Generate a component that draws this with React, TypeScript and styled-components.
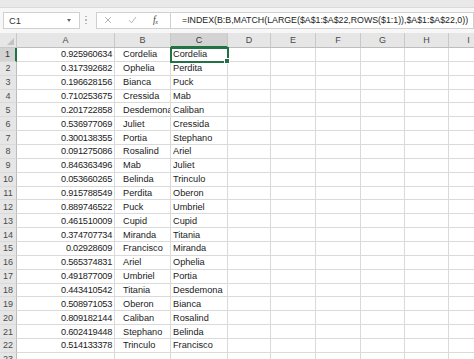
import React from "react";
import styled, { createGlobalStyle, css } from "styled-components";

const GlobalStyle = createGlobalStyle`
  html, body {
    margin: 0;
    padding: 0;
    background: #fff;
  }
  body {
    font-family: "Liberation Sans", Arial, sans-serif;
  }
`;

const GREEN = "#217346";
const ROW_H = 13.86;

const Window = styled.div`
  width: 474px;
  height: 359px;
  overflow: hidden;
  background: #fff;
`;

const Ribbon = styled.div`
  height: 7px;
  background: #e9e9e9;
  border-bottom: 1px solid #dadada;
`;

const FormulaBar = styled.div`
  height: 24px;
  background: #f7f7f7;
  display: flex;
  align-items: center;
  padding: 0 0 0 3px;
`;

const NameBox = styled.div`
  width: 77px;
  height: 17px;
  box-sizing: border-box;
  background: #fff;
  border: 1px solid #d0d0d0;
  display: flex;
  align-items: center;
  justify-content: space-between;
  padding: 0 8px 0 5px;
  font-size: 9.4px;
  color: #333;
`;

const Caret = styled.span`
  width: 0;
  height: 0;
  border-left: 2.5px solid transparent;
  border-right: 2.5px solid transparent;
  border-top: 3px solid #666;
`;

const Grip = styled.div`
  width: 12px;
  margin-right: 4px;
  display: flex;
  flex-direction: column;
  align-items: center;
  gap: 2px;

  span {
    width: 1.5px;
    height: 1.5px;
    background: #b8b8b8;
  }
`;

const ActionBox = styled.div`
  width: 74px;
  height: 17px;
  box-sizing: border-box;
  background: #fff;
  border: 1px solid #d0d0d0;
  border-right: none;
  display: flex;
  align-items: center;
  gap: 16px;
  padding-left: 7px;
`;

const Fx = styled.span`
  font-family: "Liberation Serif", "Times New Roman", serif;
  font-style: italic;
  font-size: 9.5px;
  color: #444;
  letter-spacing: -0.5px;

  sub {
    font-size: 6px;
    vertical-align: -1px;
  }
`;

const Formula = styled.div`
  flex: 1;
  min-width: 0;
  height: 17px;
  box-sizing: border-box;
  background: #fff;
  border: 1px solid #d0d0d0;
  display: flex;
  align-items: center;
  padding-left: 11px;
  font-size: 8.8px;
  color: #222;
  white-space: nowrap;
`;

const Gap = styled.div`
  height: 1px;
  background: #f7f7f7;
`;

const COLS = "17px 98px 56px 57px 43px 45px 45px 44px 44px 40px";

const Grid = styled.div`
  display: grid;
  grid-template-columns: ${COLS};
  grid-template-rows: 15px;
  grid-auto-rows: ${ROW_H}px;
  font-size: 9.2px;
`;

const headerBase = css`
  background: #e6e6e6;
  color: #4a4a4a;
  display: flex;
  align-items: center;
  justify-content: center;
  box-sizing: border-box;
  font-size: 9px;
`;

const Corner = styled.div`
  ${headerBase};
  border-right: 1px solid #c8c8c8;
  border-bottom: 1px solid #c8c8c8;
  position: relative;

  &::after {
    content: "";
    position: absolute;
    right: 2px;
    bottom: 2px;
    border-left: 7px solid transparent;
    border-bottom: 7px solid #c2c2c2;
  }
`;

const ColHead = styled.div<{ $active?: boolean }>`
  ${headerBase};
  border-right: 1px solid #c8c8c8;
  border-bottom: 1px solid #bdbdbd;
  ${(p) =>
    p.$active &&
    css`
      background: #d3d3d3;
      color: #333;
      border-bottom: 2px solid ${GREEN};
    `}
`;

const RowHead = styled.div<{ $active?: boolean }>`
  ${headerBase};
  border-right: 1px solid #bdbdbd;
  border-bottom: 1px solid #dadada;
  ${(p) =>
    p.$active &&
    css`
      background: #d3d3d3;
      color: #333;
      border-right: 2px solid ${GREEN};
    `}
`;

const Cell = styled.div<{ $num?: boolean; $indent?: boolean; $selected?: boolean }>`
  box-sizing: border-box;
  border-right: 1px solid #dadada;
  border-bottom: 1px solid #dadada;
  display: flex;
  align-items: center;
  justify-content: ${(p) => (p.$num ? "flex-end" : "flex-start")};
  padding: 0 2px 0 ${(p) => (p.$indent ? "8px" : "2px")};
  color: #1a1a1a;
  white-space: nowrap;
  overflow: hidden;
  position: relative;
  ${(p) =>
    p.$num &&
    css`
      letter-spacing: -0.25px;
    `}
  ${(p) =>
    p.$selected &&
    css`
      overflow: visible;
      outline: 2px solid ${GREEN};
      outline-offset: -1px;
      z-index: 1;

      &::after {
        content: "";
        position: absolute;
        right: -3px;
        bottom: -3px;
        width: 4px;
        height: 4px;
        background: ${GREEN};
        border: 1px solid #fff;
      }
    `}
`;

const XIcon = () => (
  <svg width="8" height="8" viewBox="0 0 8 8">
    <path d="M1 1 L7 7 M7 1 L1 7" stroke="#b5b5b5" strokeWidth="1" fill="none" />
  </svg>
);

const CheckIcon = () => (
  <svg width="9" height="8" viewBox="0 0 9 8">
    <path d="M1 4.2 L3.5 6.8 L8 1" stroke="#b5b5b5" strokeWidth="1" fill="none" />
  </svg>
);

const data: [string, string, string][] = [
  ["0.925960634", "Cordelia", "Cordelia"],
  ["0.317392682", "Ophelia", "Perdita"],
  ["0.196628156", "Bianca", "Puck"],
  ["0.710253675", "Cressida", "Mab"],
  ["0.201722858", "Desdemona", "Caliban"],
  ["0.536977069", "Juliet", "Cressida"],
  ["0.300138355", "Portia", "Stephano"],
  ["0.091275086", "Rosalind", "Ariel"],
  ["0.846363496", "Mab", "Juliet"],
  ["0.053660265", "Belinda", "Trinculo"],
  ["0.915788549", "Perdita", "Oberon"],
  ["0.889746522", "Puck", "Umbriel"],
  ["0.461510009", "Cupid", "Cupid"],
  ["0.374707734", "Miranda", "Titania"],
  ["0.02928609", "Francisco", "Miranda"],
  ["0.565374831", "Ariel", "Ophelia"],
  ["0.491877009", "Umbriel", "Portia"],
  ["0.443410542", "Titania", "Desdemona"],
  ["0.508971053", "Oberon", "Bianca"],
  ["0.809182144", "Caliban", "Rosalind"],
  ["0.602419448", "Stephano", "Belinda"],
  ["0.514133378", "Trinculo", "Francisco"],
];

const columns = ["A", "B", "C", "D", "E", "F", "G", "H", "I"];
const emptyCols = 6; // D..I

export default function App() {
  const rows = [...data, ["", "", ""] as [string, string, string]];

  return (
    <>
      <GlobalStyle />
      <Window>
        <Ribbon />
        <FormulaBar>
          <NameBox>
            <span>C1</span>
            <Caret />
          </NameBox>
          <Grip>
            <span />
            <span />
            <span />
          </Grip>
          <ActionBox>
            <XIcon />
            <CheckIcon />
            <Fx>
              f<sub>x</sub>
            </Fx>
          </ActionBox>
          <Formula>=INDEX(B:B,MATCH(LARGE($A$1:$A$22,ROWS($1:1)),$A$1:$A$22,0))</Formula>
        </FormulaBar>
        <Gap />
        <Grid>
          <Corner />
          {columns.map((c) => (
            <ColHead key={c} $active={c === "C"}>
              {c}
            </ColHead>
          ))}
          {rows.map((r, i) => (
            <React.Fragment key={i}>
              <RowHead $active={i === 0}>{i + 1}</RowHead>
              <Cell $num>{r[0]}</Cell>
              <Cell $indent>{r[1]}</Cell>
              <Cell $selected={i === 0}>{r[2]}</Cell>
              {Array.from({ length: emptyCols }).map((_, j) => (
                <Cell key={j} />
              ))}
            </React.Fragment>
          ))}
        </Grid>
      </Window>
    </>
  );
}
